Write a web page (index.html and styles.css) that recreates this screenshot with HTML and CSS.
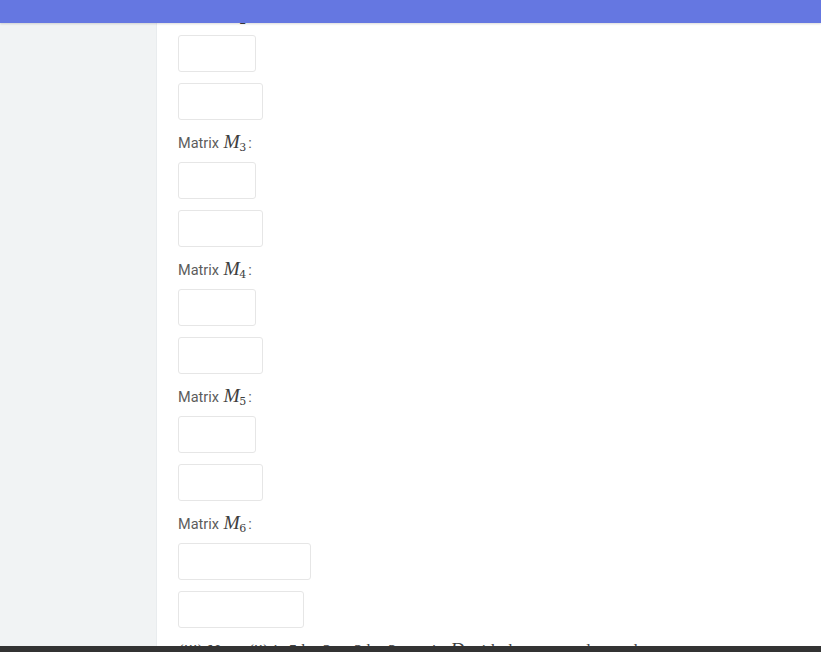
FILE: index.html
```html
<!DOCTYPE html>
<html>
<head>
<meta charset="utf-8">
<link rel="stylesheet" href="styles.css">
</head>
<body>
<header class="topbar"></header>
<div class="layout">
  <aside class="sidebar"></aside>
  <main class="content">
    <div class="block">
      <div class="label">Matrix <span class="math"><i>M</i><sub>2</sub></span><span class="colon">:</span></div>
      <div class="field w-a"></div>
      <div class="field w-b"></div>
    </div>
    <div class="block">
      <div class="label">Matrix <span class="math"><i>M</i><sub>3</sub></span><span class="colon">:</span></div>
      <div class="field w-a"></div>
      <div class="field w-b"></div>
    </div>
    <div class="block">
      <div class="label">Matrix <span class="math"><i>M</i><sub>4</sub></span><span class="colon">:</span></div>
      <div class="field w-a"></div>
      <div class="field w-b"></div>
    </div>
    <div class="block">
      <div class="label">Matrix <span class="math"><i>M</i><sub>5</sub></span><span class="colon">:</span></div>
      <div class="field w-a"></div>
      <div class="field w-b"></div>
    </div>
    <div class="block">
      <div class="label">Matrix <span class="math"><i>M</i><sub>6</sub></span><span class="colon">:</span></div>
      <div class="field w-c"></div>
      <div class="field w-d"></div>
    </div>
    <p class="next">(iii) Now, (ii) is 5 by 2 or 2 by 3 matrix <span class="math"><i>D</i></span> with the same order as above</p>
  </main>
</div>
<footer class="bottombar"></footer>
</body>
</html>
```

FILE: styles.css
```css
html, body {
  margin: 0;
  padding: 0;
  height: 100%;
  overflow: hidden;
  background: #ffffff;
  font-family: Roboto, "Noto Sans", "Liberation Sans", sans-serif;
}

.topbar {
  position: fixed;
  top: 0;
  left: 0;
  right: 0;
  height: 23px;
  background: #6577e1;
  box-shadow: 0 1px 2px rgba(0, 0, 0, 0.15);
  z-index: 10;
}

.bottombar {
  position: fixed;
  left: 0;
  right: 0;
  bottom: 0;
  height: 6px;
  background: #333333;
  z-index: 10;
}

.layout {
  display: flex;
  min-height: 100%;
}

.sidebar {
  width: 156px;
  flex: 0 0 156px;
  background: #f1f3f4;
  border-right: 1px solid #e9ecee;
}

.content {
  flex: 1;
  padding: 5px 0 0 21px;
}

.block {
  display: flex;
  flex-direction: column;
  align-items: flex-start;
  padding-bottom: 1px;
}

.label {
  height: 20px;
  line-height: 20px;
  font-size: 14.5px;
  color: #5c5c5c;
  margin-bottom: 10px;
  white-space: nowrap;
}

.math {
  font-family: "Liberation Serif", serif;
  color: #3e3e3e;
  margin-left: 1px;
}

.math i {
  font-family: "Liberation Serif", serif;
  font-size: 19.5px;
  letter-spacing: 0.5px;
}

.math sub {
  font-family: "DejaVu Serif", serif;
  font-size: 11px;
  font-style: normal;
  font-weight: normal;
  vertical-align: -3px;
  line-height: 0;
  margin-left: -1px;
}

.colon {
  margin-left: 2px;
}

.field {
  height: 35px;
  border: 1px solid #e6e6e6;
  border-radius: 3px;
  margin-bottom: 11px;
  background: #fff;
}

.w-a { width: 76px; }
.w-b { width: 83px; }
.w-c { width: 131px; }
.w-d { width: 124px; }

.next {
  margin: 0;
  font-family: "Liberation Serif", serif;
  font-size: 17px;
  line-height: 20px;
  color: #444;
  white-space: nowrap;
}
```
